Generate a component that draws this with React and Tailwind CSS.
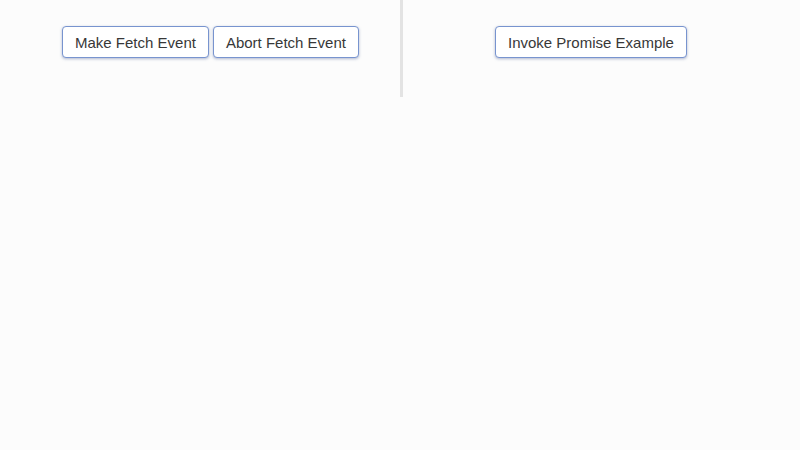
export default function App() {
  const btn =
    "h-[32px] px-[12px] bg-white border border-[#7894cf] rounded-[4px] shadow-[0_1px_3px_rgba(60,80,140,0.4)] text-[15px] text-[#383838] leading-none";
  return (
    <div
      className="w-[800px] h-[450px] bg-[#fcfcfc] flex items-start"
      style={{ fontFamily: '"Liberation Sans", Arial, sans-serif' }}
    >
      <div className="w-[400px] pt-[26px] pl-[62px] flex gap-[4px]">
        <button className={btn}>Make Fetch Event</button>
        <button className={btn}>Abort Fetch Event</button>
      </div>
      <div className="w-[3px] h-[97px] bg-[#e3e3e3]" />
      <div className="flex-1 pt-[26px] pl-[92px] flex">
        <button className={btn}>Invoke Promise Example</button>
      </div>
    </div>
  );
}
